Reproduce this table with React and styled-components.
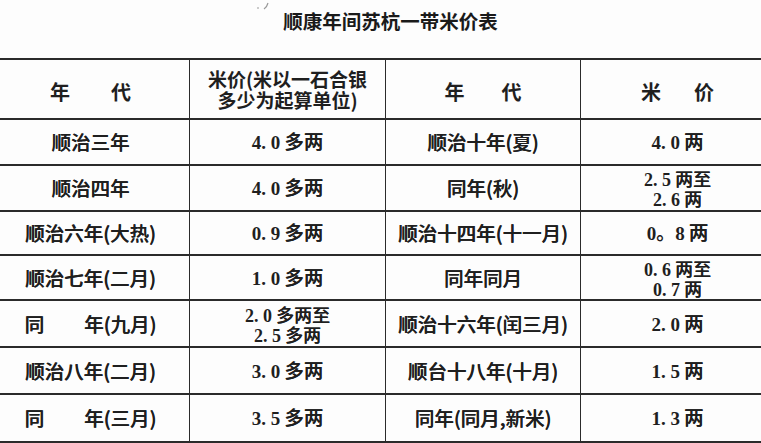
import React from 'react';
import styled, { createGlobalStyle } from 'styled-components';

const GlobalStyle = createGlobalStyle`
  html, body {
    margin: 0;
    padding: 0;
    background: #fff;
  }
`;

const Page = styled.div`
  width: 761px;
  height: 443px;
  overflow: hidden;
  background: #fdfdfd;
  color: #1f1f1f;
  font-family: "Noto Sans CJK SC", sans-serif;
`;

const TitleBar = styled.div`
  position: relative;
  height: 58px;
  box-sizing: border-box;
  padding: 10px 0 0 20px;
  display: flex;
  justify-content: center;
`;

const Title = styled.h1`
  margin: 0;
  font-size: 19.5px;
  line-height: 22px;
  font-weight: 700;
  letter-spacing: 0;
  color: #1a1a1a;
`;

// scan speck left of the title
const Speck = styled.svg`
  position: absolute;
  left: 256px;
  top: 2px;
`;

const Table = styled.div`
  margin-left: -8px;
  width: 783px;
  display: grid;
  grid-template-columns: 198px 196px 195px 194px;
  grid-template-rows: 60px 46px 46px 44px 45px 47px 47px 48px;
  border-top: 2px solid #2b2b2b;
`;

const Cell = styled.div`
  box-sizing: border-box;
  border-right: 1.5px solid #2b2b2b;
  border-bottom: 2px solid #2b2b2b;
  display: flex;
  flex-direction: column;
  align-items: center;
  justify-content: center;
  font-size: 19.5px;
  line-height: 22px;
  font-weight: 500;
  color: #1f1f1f;
  text-shadow: 0.35px 0 0 #1f1f1f;
  white-space: nowrap;
`;

const HeadCell = styled(Cell)`
  font-weight: 700;
  text-shadow: none;
  font-size: ${p => (p.$small ? '19px' : '20px')};
  line-height: ${p => (p.$small ? '21px' : '22px')};
  padding-top: ${p => (p.$small ? '0' : '6px')};
`;

const Spread = styled.span`
  display: flex;
  gap: ${p => p.$gap}px;
`;

const Name = styled.span`
  display: flex;
  align-items: center;
`;

const Gap = styled.span`
  display: inline-block;
  width: ${p => p.$w}px;
`;

const PriceLines = styled.div`
  display: flex;
  flex-direction: column;
  align-items: center;
  font-size: ${p => (p.$multi ? '18px' : '19.5px')};
  line-height: ${p => (p.$multi ? '18px' : '22px')};
  padding-top: ${p => (p.$multi ? '2px' : '0')};
`;

const Num = styled.span`
  font-family: "Liberation Serif", "Noto Sans CJK SC", serif;
  font-weight: 700;
  font-size: ${p => (p.$multi ? '18px' : '19px')};
  margin-right: 4px;
  text-shadow: none;
  white-space: pre;
`;

const rows = [
  ['顺治三年', [['4. 0', '多两']], '顺治十年(夏)', [['4. 0', '两']]],
  ['顺治四年', [['4. 0', '多两']], '同年(秋)', [['2. 5', '两至'], ['2. 6', '两']]],
  ['顺治六年(大热)', [['0. 9', '多两']], '顺治十四年(十一月)', [['0。8', '两']]],
  ['顺治七年(二月)', [['1. 0', '多两']], '同年同月', [['0. 6', '两至'], ['0. 7', '两']]],
  [['同', '年(九月)'], [['2. 0', '多两至'], ['2. 5', '多两']], '顺治十六年(闰三月)', [['2. 0', '两']]],
  ['顺治八年(二月)', [['3. 0', '多两']], '顺台十八年(十月)', [['1. 5', '两']]],
  [['同', '年(三月)'], [['3. 5', '多两']], '同年(同月,新米)', [['1. 3', '两']]],
];

function NameText({ value }) {
  if (Array.isArray(value)) {
    return (
      <Name>
        {value[0]}
        <Gap $w={40} />
        {value[1]}
      </Name>
    );
  }
  return <Name>{value}</Name>;
}

function Price({ lines }) {
  const multi = lines.length > 1;
  return (
    <PriceLines $multi={multi}>
      {lines.map(([n, u], i) => (
        <span key={i}>
          <Num $multi={multi}>{n}</Num>
          {u}
        </span>
      ))}
    </PriceLines>
  );
}

export default function App() {
  return (
    <Page>
      <GlobalStyle />
      <TitleBar>
        <Speck width="14" height="10" viewBox="0 0 14 10">
          <path d="M1 6 L3 6 M8 7 Q11 5 12 1" stroke="#9a9a9a" strokeWidth="1.2" fill="none" />
        </Speck>
        <Title>顺康年间苏杭一带米价表</Title>
      </TitleBar>
      <Table>
        <HeadCell>
          <Spread $gap={41}><span>年</span><span>代</span></Spread>
        </HeadCell>
        <HeadCell $small>
          <span>米价(米以一石合银</span>
          <span>多少为起算单位)</span>
        </HeadCell>
        <HeadCell>
          <Spread $gap={37}><span>年</span><span>代</span></Spread>
        </HeadCell>
        <HeadCell>
          <Spread $gap={33}><span>米</span><span>价</span></Spread>
        </HeadCell>
        {rows.map((r, i) => (
          <React.Fragment key={i}>
            <Cell><NameText value={r[0]} /></Cell>
            <Cell><Price lines={r[1]} /></Cell>
            <Cell><NameText value={r[2]} /></Cell>
            <Cell><Price lines={r[3]} /></Cell>
          </React.Fragment>
        ))}
      </Table>
    </Page>
  );
}
